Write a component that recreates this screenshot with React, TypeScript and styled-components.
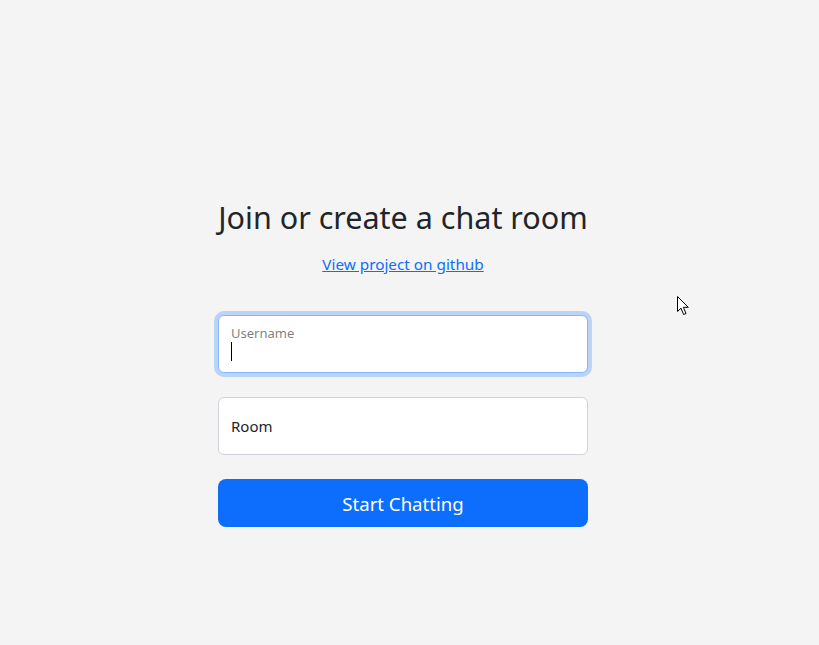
import React from "react";
import styled, { createGlobalStyle } from "styled-components";

const Global = createGlobalStyle`
  html, body { margin: 0; padding: 0; background: #f4f4f4; }
  body { font-family: "Noto Sans", "Open Sans", sans-serif; color: #212529; }
  * { box-sizing: border-box; }
`;

const Page = styled.div`
  position: relative;
  width: 819px;
  height: 645px;
  background: #f4f4f4;
  overflow: hidden;
  padding: 197px 13px 0 0;
`;

const Container = styled.main`
  width: 370px;
  margin: 0 auto;
  display: flex;
  flex-direction: column;
  align-items: stretch;
`;

const Title = styled.h1`
  margin: 0;
  font-size: 30.5px;
  font-weight: 400;
  line-height: 41px;
  text-align: center;
  color: #212529;
  white-space: nowrap;
`;

const RepoLink = styled.a`
  margin-top: 14px;
  align-self: center;
  font-size: 15.3px;
  line-height: 24px;
  color: #0d6efd;
  text-decoration: underline;
`;

const Form = styled.form`
  margin-top: 39px;
  display: flex;
  flex-direction: column;
  gap: 24px;
`;

const Field = styled.div<{ $focused?: boolean }>`
  position: relative;
  height: 58px;
  background: #fff;
  border: 1px solid ${(p) => (p.$focused ? "#86b7fe" : "#ced4da")};
  border-radius: 6px;
  box-shadow: ${(p) => (p.$focused ? "0 0 0 4px rgba(13,110,253,0.25)" : "none")};
`;

const Input = styled.input`
  width: 100%;
  height: 100%;
  border: 0;
  outline: none;
  background: transparent;
  border-radius: 6px;
  padding: 26px 12px 8px;
  font: inherit;
  font-size: 16px;
  color: #212529;
  caret-color: transparent;
`;

const Label = styled.label<{ $floated?: boolean }>`
  position: absolute;
  left: 12px;
  top: ${(p) => (p.$floated ? "9px" : "16px")};
  font-size: ${(p) => (p.$floated ? "13px" : "15px")};
  line-height: ${(p) => (p.$floated ? "17px" : "24px")};
  color: ${(p) => (p.$floated ? "rgba(33,37,41,0.6)" : "#212529")};
  pointer-events: none;
`;

const Caret = styled.span`
  position: absolute;
  left: 12px;
  top: 26px;
  width: 1px;
  height: 19px;
  background: #000;
`;

const Button = styled.button`
  height: 48px;
  border: 0;
  border-radius: 8px;
  background: #0d6efd;
  color: #fff;
  font: inherit;
  font-size: 18.6px;
  cursor: pointer;
`;

const Pointer = styled.svg`
  position: absolute;
  left: 676px;
  top: 295px;
`;

export default function App() {
  return (
    <Page>
      <Global />
      <Container>
        <Title>Join or create a chat room</Title>
        <RepoLink href="#">View project on github</RepoLink>
        <Form onSubmit={(e) => e.preventDefault()}>
          <Field $focused>
            <Input id="username" />
            <Label htmlFor="username" $floated>Username</Label>
            <Caret />
          </Field>
          <Field>
            <Input id="room" />
            <Label htmlFor="room">Room</Label>
          </Field>
          <Button type="submit">Start Chatting</Button>
        </Form>
      </Container>
      <Pointer width="14" height="22" viewBox="0 0 14 22">
        <path
          d="M1.5 1.5 L1.5 16.5 L5 13.2 L7.6 19.5 L10 18.5 L7.4 12.3 L12.3 12.3 Z"
          fill="#fff"
          stroke="#000"
          strokeWidth="1"
          strokeLinejoin="miter"
        />
      </Pointer>
    </Page>
  );
}
